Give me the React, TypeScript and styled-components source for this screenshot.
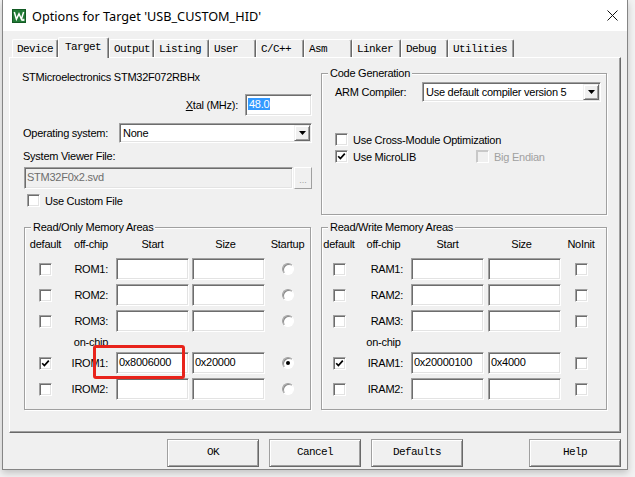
import React from "react";
import styled, { createGlobalStyle } from "styled-components";

const GlobalStyle = createGlobalStyle`
  html, body { margin: 0; padding: 0; }
  * { box-sizing: border-box; }
  body {
    width: 635px;
    height: 477px;
    overflow: hidden;
    background: #f2f2f2;
    font-family: "Liberation Sans", Arial, sans-serif;
    font-size: 11px;
    letter-spacing: -0.25px;
    color: #000;
  }
`;

/* ---------- window frame ---------- */

const Desktop = styled.div`
  width: 635px;
  height: 477px;
  padding-left: 2px;
`;

const Window = styled.div`
  width: 626px;
  height: 470px;
  background: #f0f0f0;
  border: 1px solid #858585;
  border-top: 0;
  box-shadow: 0 3px 7px rgba(0, 0, 0, 0.2);
  display: flex;
  flex-direction: column;
`;

const TitleBar = styled.div`
  height: 31px;
  flex: none;
  background: #fff;
  display: flex;
  align-items: center;
  padding: 0 9px 0 9px;
`;

const TitleText = styled.div`
  flex: 1;
  margin-left: 6px;
  font-family: "Noto Sans", "Liberation Sans", sans-serif;
  font-size: 12.7px;
  letter-spacing: 0;
  white-space: nowrap;
`;

const Body = styled.div`
  flex: 1;
  display: flex;
  flex-direction: column;
  padding: 6px 6px 0;
`;

/* ---------- tabs ---------- */

const TabStrip = styled.div`
  height: 20px;
  display: flex;
  align-items: flex-end;
  padding-left: 3px;
`;

const Tab = styled.div<{ $w: number; $active?: boolean }>`
  width: ${(p) => p.$w}px;
  height: ${(p) => (p.$active ? 21 : 18)}px;
  margin-bottom: ${(p) => (p.$active ? -1 : 0)}px;
  position: relative;
  z-index: ${(p) => (p.$active ? 2 : 1)};
  background: #f0f0f0;
  border-top: 1px solid #fff;
  border-left: 1px solid #fff;
  border-right: 1px solid #696969;
  box-shadow: inset -1px 0 0 #a0a0a0;
  border-top-left-radius: 2px;
  border-top-right-radius: 2px;
  padding: 0 0 ${(p) => (p.$active ? 3 : 0)}px ${(p) => (p.$active ? 6 : 4)}px;
  display: flex;
  align-items: center;
  font-family: "Liberation Mono", monospace;
  font-size: 11px;
  letter-spacing: -0.6px;
  white-space: nowrap;
`;

const Panel = styled.div`
  height: 376px;
  background: #f0f0f0;
  border-style: solid;
  border-width: 1px;
  border-color: #fff #696969 #696969 #fff;
  box-shadow: inset -1px -1px 0 #a0a0a0;
  padding: 0 12px 0 14px;
`;

/* ---------- common controls ---------- */

const Text = styled.span<{ $muted?: boolean }>`
  line-height: 14px;
  white-space: nowrap;
  color: ${(p) => (p.$muted ? "#a0a0a0" : "#000")};
`;

const Field = styled.div<{ $w?: number; $disabled?: boolean }>`
  width: ${(p) => (p.$w ? `${p.$w}px` : "100%")};
  height: 22px;
  flex: ${(p) => (p.$w ? "none" : "1")};
  background: ${(p) => (p.$disabled ? "#f0f0f0" : "#fff")};
  border: 1px solid;
  border-color: #a0a0a0 #fff #fff #a0a0a0;
  box-shadow: inset 1px 1px 0 #6d6d6d, inset -1px -1px 0 #e3e3e3;
  padding: 2px 0 0 2px;
  line-height: 14px;
  color: ${(p) => (p.$disabled ? "#6d6d6d" : "#000")};
  white-space: nowrap;
  overflow: hidden;
`;

const Selected = styled.span`
  background: #3399ff;
  color: #fff;
  padding: 0 1px;
`;

const Select = styled.div`
  height: 20px;
  display: flex;
  align-items: center;
  background: #fff;
  border: 1px solid;
  border-color: #a0a0a0 #fff #fff #a0a0a0;
  box-shadow: inset 1px 1px 0 #6d6d6d, inset -1px -1px 0 #e3e3e3;
  padding: 0 1px 0 3px;
`;

const SelectValue = styled.span`
  flex: 1;
  white-space: nowrap;
`;

const DropButton = styled.span`
  width: 16px;
  height: 16px;
  display: flex;
  align-items: center;
  justify-content: center;
  background: #f0f0f0;
  border: 1px solid;
  border-color: #f0f0f0 #696969 #696969 #f0f0f0;
  box-shadow: inset 1px 1px 0 #fff, inset -1px -1px 0 #a0a0a0;
`;

const BrowseButton = styled.div`
  width: 18px;
  height: 22px;
  flex: none;
  background: #f0f0f0;
  border: 1px solid;
  border-color: #fff #a0a0a0 #a0a0a0 #fff;
  color: #a0a0a0;
  font-size: 9px;
  letter-spacing: 0;
  display: flex;
  align-items: flex-end;
  justify-content: center;
  padding-bottom: 3px;
  line-height: 9px;
`;

const Box = styled.span<{ $disabled?: boolean }>`
  width: 13px;
  height: 13px;
  flex: none;
  display: inline-flex;
  align-items: center;
  justify-content: center;
  background: ${(p) => (p.$disabled ? "#f0f0f0" : "#fff")};
  border: 1px solid;
  border-color: ${(p) =>
    p.$disabled ? "#c8c8c8 #fff #fff #c8c8c8" : "#a0a0a0 #fff #fff #a0a0a0"};
  box-shadow: ${(p) =>
    p.$disabled
      ? "inset 1px 1px 0 #c8c8c8"
      : "inset 1px 1px 0 #6d6d6d, inset -1px -1px 0 #e3e3e3"};
`;

const Round = styled.span<{ $on?: boolean }>`
  width: 12px;
  height: 12px;
  border-radius: 50%;
  background: #fff;
  border: 1px solid;
  border-color: #a0a0a0 #fff #fff #a0a0a0;
  box-shadow: inset 1px 1px 0 #8a8a8a;
  display: inline-flex;
  align-items: center;
  justify-content: center;
  &::after {
    content: "";
    width: 4px;
    height: 4px;
    border-radius: 50%;
    background: ${(p) => (p.$on ? "#000" : "transparent")};
  }
`;

const CheckLabel = styled.label`
  display: flex;
  align-items: center;
  gap: 5px;
  height: 13px;
`;

function CheckBox({ on, disabled }: { on?: boolean; disabled?: boolean }) {
  return (
    <Box $disabled={disabled}>
      {on && (
        <svg width="9" height="9" viewBox="0 0 9 9">
          <path d="M1.2 4.2 L3.4 6.6 L7.8 1.6" stroke="#000" strokeWidth="1.7" fill="none" />
        </svg>
      )}
    </Box>
  );
}

function Check({ label, on, disabled }: { label: string; on?: boolean; disabled?: boolean }) {
  return (
    <CheckLabel>
      <CheckBox on={on} disabled={disabled} />
      <Text $muted={disabled}>{label}</Text>
    </CheckLabel>
  );
}

/* ---------- group boxes ---------- */

const Group = styled.div<{ $h: number }>`
  position: relative;
  height: ${(p) => p.$h}px;
  border: 1px solid #a0a0a0;
  box-shadow: inset 1px 1px 0 #fff, 1px 1px 0 #fff;
`;

const CodeGroup = styled(Group)`
  margin-top: 15px;
`;

const Legend = styled.span`
  position: absolute;
  top: -8px;
  left: 6px;
  padding: 0 2px;
  background: #f0f0f0;
  line-height: 14px;
  white-space: nowrap;
`;

/* ---------- upper area ---------- */

const TopSection = styled.div`
  height: 169px;
  display: grid;
  grid-template-columns: 288px 286px;
  column-gap: 9px;
  align-items: start;
`;

const LeftColumn = styled.div`
  display: flex;
  flex-direction: column;
  padding-top: 12px;
`;

const DeviceName = styled(Text)`
  display: block;
  margin-left: -2px;
`;

const XtalRow = styled.div`
  margin-top: 10px;
  height: 22px;
  display: flex;
  justify-content: flex-end;
  align-items: center;
  gap: 7px;
`;

const OsRow = styled.div`
  margin-top: 7px;
  height: 20px;
  display: grid;
  grid-template-columns: 95px 193px;
  align-items: center;
`;

const OsLabel = styled(Text)`
  margin-left: -1px;
`;

const SvfLabel = styled(Text)`
  display: block;
  margin-top: 6px;
  margin-left: -1px;
`;

const FileRow = styled.div`
  margin-top: 4px;
  display: flex;
  gap: 1px;
`;

const CustomRow = styled.div`
  margin-top: 5px;
  padding-left: 3px;
`;

const CodeGroupBody = styled.div`
  padding: 8px 0 0 13px;
`;

const ArmRow = styled.div`
  height: 20px;
  display: grid;
  grid-template-columns: 87px 179px;
  align-items: center;
`;

const OptionRow = styled.div<{ $top: number }>`
  margin-top: ${(p) => p.$top}px;
  display: grid;
  grid-template-columns: 141px 1fr;
`;

/* ---------- memory areas ---------- */

const MemorySection = styled.div`
  display: grid;
  grid-template-columns: 287px 286px;
  column-gap: 10px;
`;

const MemGrid = styled.div<{ $cols: string }>`
  height: 100%;
  padding-top: 8px;
  display: grid;
  grid-template-columns: ${(p) => p.$cols};
  grid-template-rows: 18px 22px 22px 22px 12px 22px 22px;
  row-gap: 4px;
  align-items: center;
`;

const HeadCell = styled.div<{ $pr?: number; $w?: number }>`
  align-self: start;
  line-height: 16px;
  white-space: nowrap;
  text-align: center;
  width: ${(p) => (p.$w ? `${p.$w}px` : "auto")};
  padding-right: ${(p) => p.$pr ?? 0}px;
`;

const FirstHeadCell = styled(HeadCell)`
  grid-column: 1;
  justify-self: center;
`;

const MidCell = styled.div`
  justify-self: center;
  display: flex;
`;

const LeadCell = styled(MidCell)`
  grid-column: 1;
`;

const RowLabel = styled(Text)`
  justify-self: end;
  padding-right: 8px;
`;

const ChipLabel = styled(Text)`
  grid-column: 2;
  justify-self: center;
  line-height: 12px;
`;

const Annotation = styled.div`
  position: absolute;
  left: 68px;
  top: 117px;
  width: 92px;
  height: 34px;
  border: 3px solid #e8231b;
  border-radius: 3px;
  pointer-events: none;
`;

type MemRow = { label: string; def: boolean; start: string; size: string; flag: boolean };

const romOff: MemRow[] = [
  { label: "ROM1:", def: false, start: "", size: "", flag: false },
  { label: "ROM2:", def: false, start: "", size: "", flag: false },
  { label: "ROM3:", def: false, start: "", size: "", flag: false },
];
const romOn: MemRow[] = [
  { label: "IROM1:", def: true, start: "0x8006000", size: "0x20000", flag: true },
  { label: "IROM2:", def: false, start: "", size: "", flag: false },
];
const ramOff: MemRow[] = [
  { label: "RAM1:", def: false, start: "", size: "", flag: false },
  { label: "RAM2:", def: false, start: "", size: "", flag: false },
  { label: "RAM3:", def: false, start: "", size: "", flag: false },
];
const ramOn: MemRow[] = [
  { label: "IRAM1:", def: true, start: "0x20000100", size: "0x4000", flag: false },
  { label: "IRAM2:", def: false, start: "", size: "", flag: false },
];

function MemoryArea({
  title,
  cols,
  flagTitle,
  radio,
  off,
  on,
  children,
}: {
  title: string;
  cols: string;
  flagTitle: string;
  radio?: boolean;
  off: MemRow[];
  on: MemRow[];
  children?: React.ReactNode;
}) {
  const row = (r: MemRow) => (
    <React.Fragment key={r.label}>
      <LeadCell>
        <CheckBox on={r.def} />
      </LeadCell>
      <RowLabel>{r.label}</RowLabel>
      <Field $w={73}>{r.start}</Field>
      <Field $w={73}>{r.size}</Field>
      <MidCell>{radio ? <Round $on={r.flag} /> : <CheckBox on={r.flag} />}</MidCell>
    </React.Fragment>
  );
  return (
    <Group $h={183}>
      <Legend>{title}</Legend>
      <MemGrid $cols={cols}>
        <FirstHeadCell>default</FirstHeadCell>
        <HeadCell>off-chip</HeadCell>
        <HeadCell $w={73}>Start</HeadCell>
        <HeadCell $w={73} $pr={6}>
          Size
        </HeadCell>
        <HeadCell>{flagTitle}</HeadCell>
        {off.map(row)}
        <ChipLabel>on-chip</ChipLabel>
        {on.map(row)}
      </MemGrid>
      {children}
    </Group>
  );
}

/* ---------- dialog buttons ---------- */

const ButtonBar = styled.div`
  margin-top: 6px;
  height: 28px;
  display: flex;
  gap: 10px;
  padding-left: 158px;
`;

const DialogButton = styled.div<{ $push?: boolean }>`
  width: 92px;
  height: 28px;
  margin-left: ${(p) => (p.$push ? "auto" : "0")};
  background: #f0f0f0;
  border: 1px solid;
  border-color: #a0a0a0 #696969 #696969 #a0a0a0;
  box-shadow: inset 1px 1px 0 #fff, inset -1px -1px 0 #a0a0a0;
  display: flex;
  align-items: center;
  justify-content: center;
  padding-bottom: 2px;
  font-family: "Liberation Mono", monospace;
  font-size: 11px;
  letter-spacing: -0.6px;
`;

/* ---------- icons ---------- */

function AppIcon() {
  return (
    <svg width="14" height="14" viewBox="0 0 14 14">
      <rect width="14" height="14" fill="#217a36" />
      <rect x="0.5" y="0.5" width="13" height="13" fill="none" stroke="#135a24" />
      <path d="M2.3 3 L4.4 10.2 L7 4.8 L9.4 10.2 L11.6 3" stroke="#fff" strokeWidth="1.5" fill="none" />
      <rect x="10" y="9.8" width="2.4" height="2.2" fill="#e8f4e8" />
    </svg>
  );
}

function CloseIcon() {
  return (
    <svg width="11" height="11" viewBox="0 0 11 11">
      <path d="M0.5 0.5 L10.5 10.5 M10.5 0.5 L0.5 10.5" stroke="#111" strokeWidth="1" />
    </svg>
  );
}

function DownArrow() {
  return (
    <svg width="7" height="4" viewBox="0 0 7 4">
      <polygon points="0,0 7,0 3.5,4" fill="#000" />
    </svg>
  );
}

const tabs: { name: string; w: number }[] = [
  { name: "Device", w: 46 },
  { name: "Target", w: 51 },
  { name: "Output", w: 45 },
  { name: "Listing", w: 55 },
  { name: "User", w: 47 },
  { name: "C/C++", w: 48 },
  { name: "Asm", w: 48 },
  { name: "Linker", w: 49 },
  { name: "Debug", w: 47 },
  { name: "Utilities", w: 66 },
];

export default function App() {
  return (
    <Desktop>
      <GlobalStyle />
      <Window>
        <TitleBar>
          <AppIcon />
          <TitleText>Options for Target 'USB_CUSTOM_HID'</TitleText>
          <CloseIcon />
        </TitleBar>
        <Body>
          <TabStrip>
            {tabs.map((t) => (
              <Tab key={t.name} $w={t.w} $active={t.name === "Target"}>
                {t.name}
              </Tab>
            ))}
          </TabStrip>
          <Panel>
            <TopSection>
              <LeftColumn>
                <DeviceName>STMicroelectronics STM32F072RBHx</DeviceName>
                <XtalRow>
                  <Text>
                    <u>X</u>tal (MHz):
                  </Text>
                  <Field $w={67}>
                    <Selected>48.0</Selected>
                  </Field>
                </XtalRow>
                <OsRow>
                  <OsLabel>Operating system:</OsLabel>
                  <Select>
                    <SelectValue>None</SelectValue>
                    <DropButton>
                      <DownArrow />
                    </DropButton>
                  </Select>
                </OsRow>
                <SvfLabel>System Viewer File:</SvfLabel>
                <FileRow>
                  <Field $disabled>STM32F0x2.svd</Field>
                  <BrowseButton>...</BrowseButton>
                </FileRow>
                <CustomRow>
                  <Check label="Use Custom File" />
                </CustomRow>
              </LeftColumn>
              <CodeGroup $h={142}>
                <Legend>Code Generation</Legend>
                <CodeGroupBody>
                  <ArmRow>
                    <Text>ARM Compiler:</Text>
                    <Select>
                      <SelectValue>Use default compiler version 5</SelectValue>
                      <DropButton>
                        <DownArrow />
                      </DropButton>
                    </Select>
                  </ArmRow>
                  <OptionRow $top={31}>
                    <Check label="Use Cross-Module Optimization" />
                  </OptionRow>
                  <OptionRow $top={4}>
                    <Check label="Use MicroLIB" on />
                    <Check label="Big Endian" disabled />
                  </OptionRow>
                </CodeGroupBody>
              </CodeGroup>
            </TopSection>
            <MemorySection>
              <MemoryArea
                title="Read/Only Memory Areas"
                cols="41px 50px 76px 73px 45px"
                flagTitle="Startup"
                radio
                off={romOff}
                on={romOn}
              >
                <Annotation />
              </MemoryArea>
              <MemoryArea
                title="Read/Write Memory Areas"
                cols="34px 55px 77px 73px 40px"
                flagTitle="NoInit"
                off={ramOff}
                on={ramOn}
              />
            </MemorySection>
          </Panel>
          <ButtonBar>
            <DialogButton>OK</DialogButton>
            <DialogButton>Cancel</DialogButton>
            <DialogButton>Defaults</DialogButton>
            <DialogButton $push>Help</DialogButton>
          </ButtonBar>
        </Body>
      </Window>
    </Desktop>
  );
}
